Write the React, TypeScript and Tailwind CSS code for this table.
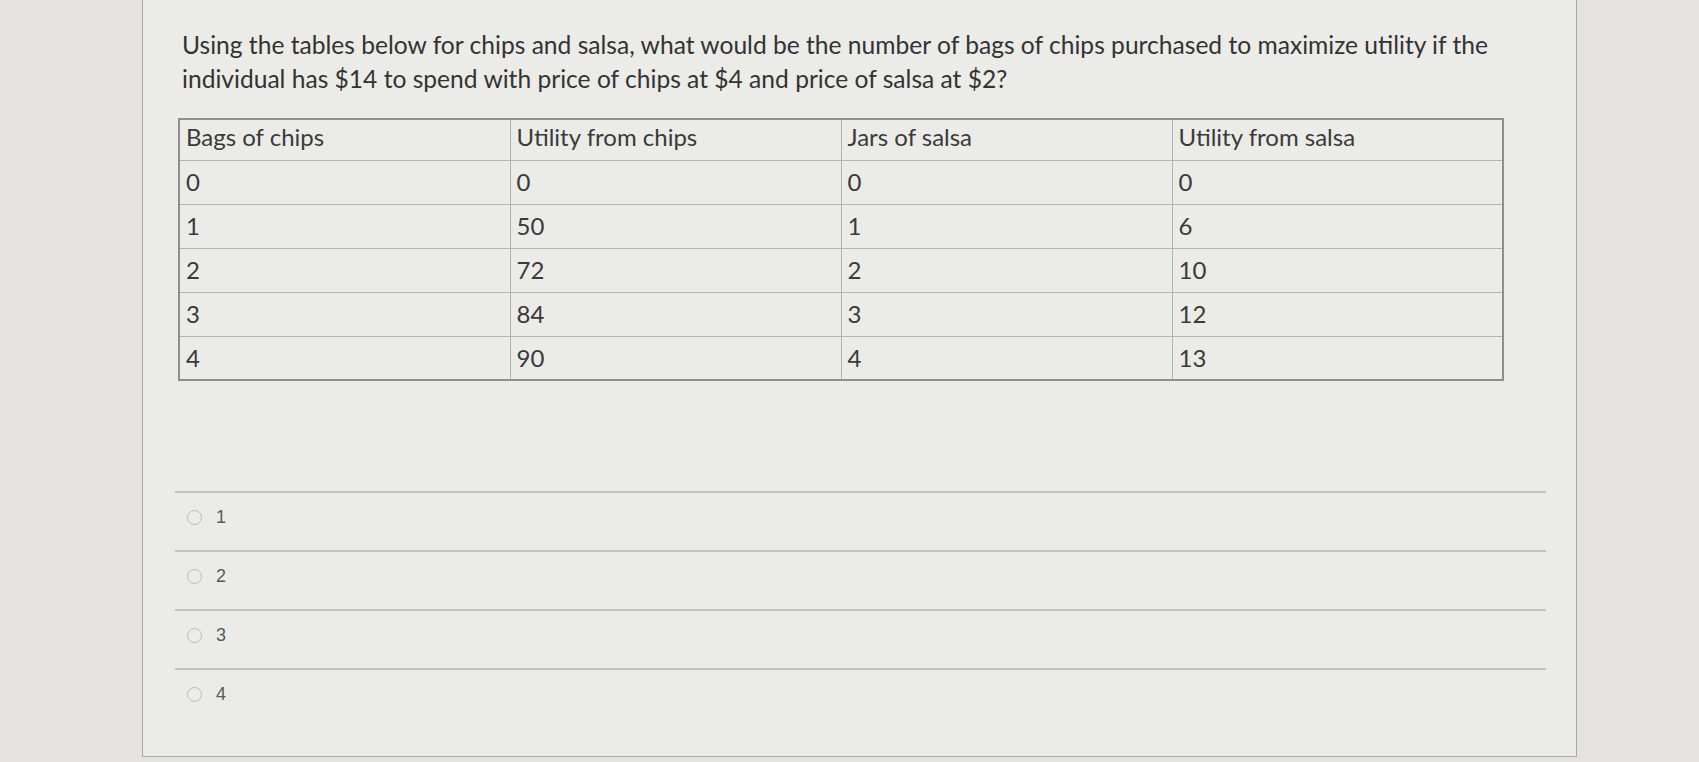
const headers = ["Bags of chips", "Utility from chips", "Jars of salsa", "Utility from salsa"];

const rows = [
  ["0", "0", "0", "0"],
  ["1", "50", "1", "6"],
  ["2", "72", "2", "10"],
  ["3", "84", "3", "12"],
  ["4", "90", "4", "13"],
];

const options = ["1", "2", "3", "4"];

export default function App() {
  return (
    <div className="h-[762px] w-[1699px] overflow-hidden bg-[#e4e3df]">
      <div className="ml-[142px] h-[757px] w-[1435px] border-x border-b border-[#a9a9a6] bg-[#ebebe7]">
        <div className="pl-[32px] pr-[30px]">
          <p
            className="pl-[7px] pt-[28px] text-[24.6px] leading-[34px] whitespace-nowrap text-[#333333]"
            style={{ fontFamily: "Lato, 'Open Sans', sans-serif" }}
          >
            Using the tables below for chips and salsa, what would be the number of bags of chips purchased to maximize utility if the
            <br />
            individual has $14 to spend with price of chips at $4 and price of salsa at $2?
          </p>

          <table
            className="ml-[3px] mt-[22px] w-[1326px] table-fixed border-collapse border-2 border-[#8f8f8c] text-[24px] text-[#3a3a3a]"
            style={{ fontFamily: "Lato, 'Open Sans', sans-serif" }}
          >
            <thead>
              <tr className="h-[41px]">
                {headers.map((h) => (
                  <th key={h} className="border border-[#b3b3b0] pb-[6px] pl-[6px] text-left font-normal leading-[30px]">
                    {h}
                  </th>
                ))}
              </tr>
            </thead>
            <tbody>
              {rows.map((r, i) => (
                <tr key={i} className="h-[44px]">
                  {r.map((c, j) => (
                    <td key={j} className="border border-[#b3b3b0] pl-[6px] leading-[30px]">
                      {c}
                    </td>
                  ))}
                </tr>
              ))}
            </tbody>
          </table>

          <div className="mt-[110px]">
            {options.map((o) => (
              <div key={o} className="flex h-[59px] items-start border-t-2 border-[#c2c2bf] pt-[13px]">
                <label
                  className="flex items-center gap-[14px] pl-[12px] text-[18px] leading-[22px] text-[#5a5a5a]"
                  style={{ fontFamily: "'Liberation Sans', Arial, sans-serif" }}
                >
                  <span className="block h-[15px] w-[15px] rounded-full border border-[#b9b9b6] bg-[#ececea]" />
                  {o}
                </label>
              </div>
            ))}
          </div>
        </div>
      </div>
    </div>
  );
}
